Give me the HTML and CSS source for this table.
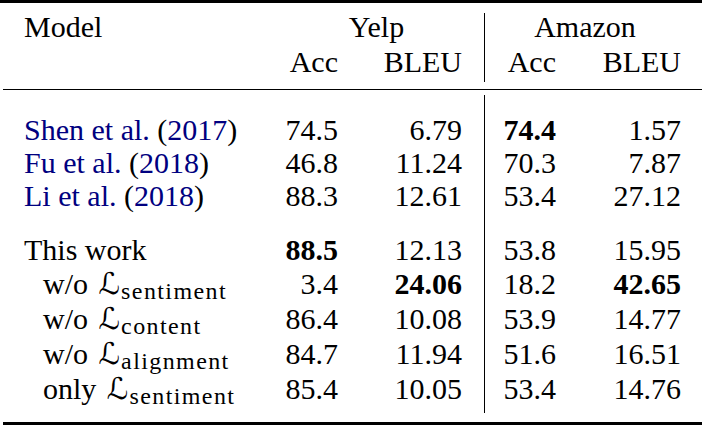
FILE: index.html
```html
<!DOCTYPE html>
<html>
<head>
<meta charset="utf-8">
<link rel="stylesheet" href="styles.css">
</head>
<body>
<div class="table">
  <div class="toprule"></div>
  <div class="head">
    <div class="row r1">
      <div class="cell c1">Model</div>
      <div class="cell yelp">Yelp</div>
      <div class="cell amazon am">Amazon</div>
    </div>
    <div class="row r2">
      <div class="cell c1"></div>
      <div class="cell c2">Acc</div>
      <div class="cell c3">BLEU</div>
      <div class="cell c4 am">Acc</div>
      <div class="cell c5">BLEU</div>
    </div>
  </div>
  <div class="midrule"></div>
  <div class="body">
    <div class="row sp sp-top"><div class="cell"></div><div class="cell"></div><div class="cell"></div><div class="cell am"></div><div class="cell"></div></div>
    <div class="row">
      <div class="cell c1"><span class="cite">Shen et al.</span> (<span class="cite">2017</span>)</div>
      <div class="cell c2">74.5</div>
      <div class="cell c3">6.79</div>
      <div class="cell c4 am"><span class="bold">74.4</span></div>
      <div class="cell c5">1.57</div>
    </div>
    <div class="row">
      <div class="cell c1"><span class="cite">Fu et al.</span> (<span class="cite">2018</span>)</div>
      <div class="cell c2">46.8</div>
      <div class="cell c3">11.24</div>
      <div class="cell c4 am">70.3</div>
      <div class="cell c5">7.87</div>
    </div>
    <div class="row">
      <div class="cell c1"><span class="cite">Li et al.</span> (<span class="cite">2018</span>)</div>
      <div class="cell c2">88.3</div>
      <div class="cell c3">12.61</div>
      <div class="cell c4 am">53.4</div>
      <div class="cell c5">27.12</div>
    </div>
    <div class="row sp sp-mid"><div class="cell"></div><div class="cell"></div><div class="cell"></div><div class="cell am"></div><div class="cell"></div></div>
    <div class="row">
      <div class="cell c1">This work</div>
      <div class="cell c2"><span class="bold">88.5</span></div>
      <div class="cell c3">12.13</div>
      <div class="cell c4 am">53.8</div>
      <div class="cell c5">15.95</div>
    </div>
    <div class="row tall">
      <div class="cell c1 ind">w/o <span class="cal">&#8466;</span><span class="sub">sentiment</span></div>
      <div class="cell c2">3.4</div>
      <div class="cell c3"><span class="bold">24.06</span></div>
      <div class="cell c4 am">18.2</div>
      <div class="cell c5"><span class="bold">42.65</span></div>
    </div>
    <div class="row tall">
      <div class="cell c1 ind">w/o <span class="cal">&#8466;</span><span class="sub">content</span></div>
      <div class="cell c2">86.4</div>
      <div class="cell c3">10.08</div>
      <div class="cell c4 am">53.9</div>
      <div class="cell c5">14.77</div>
    </div>
    <div class="row tall">
      <div class="cell c1 ind">w/o <span class="cal">&#8466;</span><span class="sub">alignment</span></div>
      <div class="cell c2">84.7</div>
      <div class="cell c3">11.94</div>
      <div class="cell c4 am">51.6</div>
      <div class="cell c5">16.51</div>
    </div>
    <div class="row tall">
      <div class="cell c1 ind">only <span class="cal">&#8466;</span><span class="sub">sentiment</span></div>
      <div class="cell c2">85.4</div>
      <div class="cell c3">10.05</div>
      <div class="cell c4 am">53.4</div>
      <div class="cell c5">14.76</div>
    </div>
    <div class="row sp sp-bot"><div class="cell"></div><div class="cell"></div><div class="cell"></div><div class="cell am"></div><div class="cell"></div></div>
  </div>
  <div class="bottomrule"></div>
</div>
</body>
</html>
```

FILE: styles.css
```css
html, body {
  margin: 0;
  padding: 0;
  background: #ffffff;
}

.table {
  margin-left: 3px;
  width: 699px;
  font-family: "Times New Roman", "Liberation Serif", "Noto Serif", serif;
  font-size: 30px;
  color: #000000;
}

.toprule {
  height: 3px;
  margin-left: -3px;
  background: #000000;
}

.head {
  padding-top: 10px;
}

.row {
  display: grid;
  grid-template-columns: 266px 69px 146px 72px 146px;
  line-height: 33px;
  white-space: nowrap;
}

.cell {
  font-family: "Times New Roman", "Liberation Serif", "Noto Serif", serif;
  font-size: 30px;
  color: #000000;
}

.r1 {
  line-height: 28px;
}

.r2 {
  line-height: 41px;
}

.c1 {
  padding-left: 21px;
}

.c2 {
  text-align: right;
}

.c3 {
  text-align: right;
  padding-right: 22px;
}

.c4 {
  text-align: right;
}

.c5 {
  text-align: right;
  padding-right: 21px;
}

.am {
  border-left: 1px solid #000000;
}

.yelp {
  grid-column: 2 / span 2;
  text-align: center;
}

.amazon {
  grid-column: 4 / span 2;
  text-align: center;
  padding-right: 17px;
}

.midrule {
  height: 1px;
  margin-top: 7px;
  background: #000000;
}

.body {
  margin-top: 5px;
}

.sp-top {
  height: 18px;
}

.sp-mid {
  height: 21px;
}

.sp-bot {
  height: 7px;
}

.tall {
  line-height: 35px;
}

.cite {
  color: #000080;
}

.bold {
  font-weight: bold;
}

.ind {
  padding-left: 40px;
}

.cal {
  font-family: "DejaVu Serif", "DejaVu Sans", serif;
  font-size: 30px;
  line-height: 0;
  margin-left: 3px;
}

.sub {
  font-size: 24px;
  letter-spacing: 1.4px;
  line-height: 0;
  vertical-align: -5px;
  margin-left: 1px;
}

.bottomrule {
  height: 3px;
  margin-top: 9px;
  background: #000000;
}
```
